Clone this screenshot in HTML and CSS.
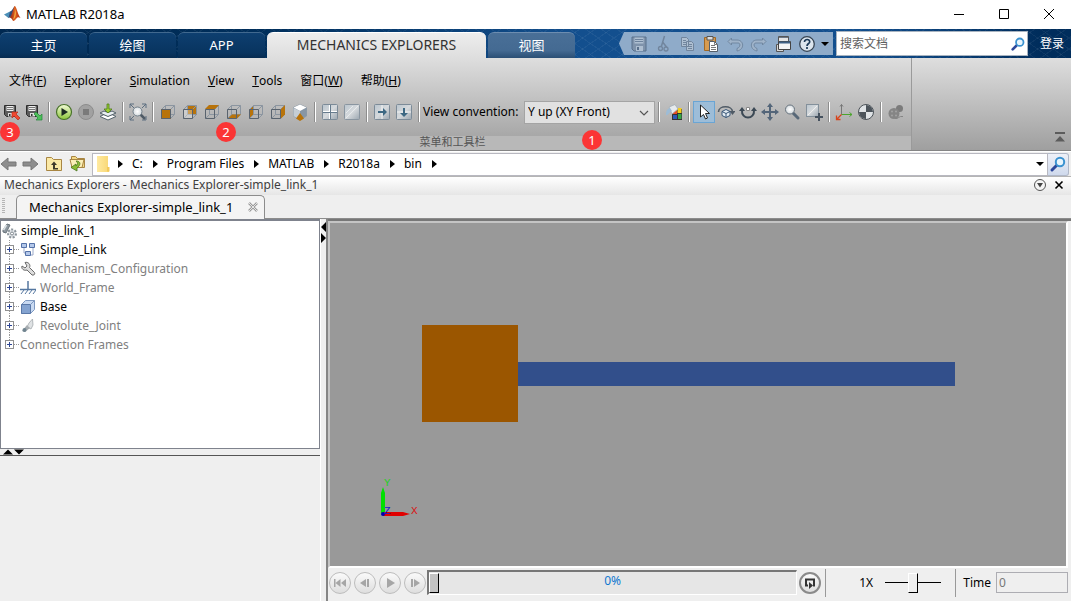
FILE: index.html
```html
<!DOCTYPE html>
<html lang="zh-CN">
<head>
    <meta charset="UTF-8">
    <meta name="viewport" content="width=device-width, initial-scale=1.0">
    <title>MATLAB R2018a</title>
    <link rel="stylesheet" href="styles.css">
</head>
<body>
    <!-- Shared shapes and gradients -->
    <svg class="defs" aria-hidden="true">
        <defs>
            <linearGradient id="green" x1="0" y1="0" x2="0" y2="1">
                <stop offset="0" stop-color="#f4fcd8"/><stop offset="1" stop-color="#8cc63a"/>
            </linearGradient>
            <linearGradient id="glass" x1="0" y1="0" x2="1" y2="1">
                <stop offset="0" stop-color="#b9c4cd"/><stop offset=".5" stop-color="#d6dadd"/><stop offset="1" stop-color="#9ba6b0"/>
            </linearGradient>
            <linearGradient id="folder" x1="0" y1="0" x2="1" y2="0">
                <stop offset="0" stop-color="#ffeaa0"/><stop offset="1" stop-color="#f8d775"/>
            </linearGradient>
            <linearGradient id="flame" x1="0" y1="0" x2="1" y2="0">
                <stop offset="0" stop-color="#8c1f16"/><stop offset=".5" stop-color="#e0601e"/><stop offset="1" stop-color="#b02a18"/>
            </linearGradient>
            <radialGradient id="ball">
                <stop offset="0" stop-color="#fff"/><stop offset="1" stop-color="#d4dade"/>
            </radialGradient>
            <symbol id="disk" viewBox="0 0 18 18">
                <path d="M1.5 2.5h11v11h-9l-2-2z" fill="#5c5c5c" stroke="#2e2e2e"/>
                <path d="M3.5 3h7v5h-7z" fill="#eee"/>
                <path d="M4 4.5h6M4 6.500h6" stroke="#777"/>
                <path d="M5 10h5v3.500H5z" fill="#ddd"/><path d="M6 11h1.500v2H6z" fill="#333"/>
            </symbol>
            <symbol id="cube-back" viewBox="0 0 18 18">
                <path d="M6.5 2.5h9v9h-9zM2.5 15.5l4-4M11.5 15.5l4-4M2.5 6.5l4-4M11.5 6.5l4-4" fill="none" stroke="#8b95a0"/>
            </symbol>
            <symbol id="cube-front" viewBox="0 0 18 18">
                <path d="M2.5 6.5h9v9h-9z" fill="none" stroke="#59636e"/>
            </symbol>
            <symbol id="magnifier" viewBox="0 0 18 18">
                <path d="M8 10L3 15" stroke="#2c479b" stroke-width="3" stroke-linecap="round"/>
                <circle cx="11" cy="7" r="4.2" fill="#e8f5fd" stroke="#3a92d0" stroke-width="2"/>
            </symbol>
        </defs>
    </svg>

    <header class="titlebar">
        <svg class="logo" viewBox="0 0 18 18">
            <path d="M0 9.5l6-3 2.5 3.5-4 3z" fill="#4b8fb8"/>
            <path d="M6 6.5c2 0 3-4 5-5.5L8 11l-3.5 2z" fill="#324a78"/>
            <path d="M10.5 1c2 0 3 8 6 12-2-1-3-1-4.5 1s-3 2-3 2-1-3-3.500-3.500C8 11 9 4 10.5 1z" fill="url(#flame)"/>
            <path d="M10.5 1.5c.7 3 .8 8-1.500 13 2-1 3-4 2.800-7z" fill="#f5b342"/>
        </svg>
        <h1>MATLAB R2018a</h1>
        <div class="window-buttons">
            <button aria-label="Minimize"><svg viewBox="0 0 12 12"><path d="M1 6.5h10"/></svg></button>
            <button aria-label="Maximize"><svg viewBox="0 0 12 12"><path d="M1.5 1.5h9v9h-9z"/></svg></button>
            <button aria-label="Close"><svg viewBox="0 0 12 12"><path d="M1 1l10 10M11 1L1 11"/></svg></button>
        </div>
    </header>

    <nav class="tabbar">
        <div class="tabs">
            <button class="tab">主页</button>
            <button class="tab">绘图</button>
            <button class="tab">APP</button>
            <button class="tab active">MECHANICS EXPLORERS</button>
            <button class="tab context">视图</button>
        </div>
        <div class="quick-access">
            <button aria-label="Save"><svg viewBox="0 0 18 18"><path d="M2 2h14v14H4l-2-2z" fill="#7f93ab" stroke="#59708c"/><path d="M4.5 2.5h9v6h-9z" fill="#aebfd1"/><path d="M5 4.5h8M5 6.5h8" stroke="#6d839d"/><path d="M6 11h7v5H6z" fill="#aebfd1"/><path d="M7 12h2v3H7z" fill="#59708c"/></svg></button>
            <button aria-label="Cut"><svg viewBox="0 0 18 18"><path d="M10.5 1L7.5 11M9 7.5l3.5 4.5" fill="none" stroke="#71859d" stroke-width="1.5"/><circle cx="6.5" cy="13.5" r="2" fill="none" stroke="#71859d" stroke-width="1.3"/><circle cx="12" cy="14" r="2" fill="none" stroke="#71859d" stroke-width="1.3"/></svg></button>
            <button aria-label="Copy"><svg viewBox="0 0 18 18"><path d="M3.5 2.5h5l2 2v7h-7zM8.5 6.5h5l2 2v7h-7z" fill="#aebfd1" stroke="#71859d"/><path d="M5 5.5h3M5 7.5h3M5 9.5h3M10 9.5h4M10 11.5h4M10 13.5h4" stroke="#71859d"/></svg></button>
            <button aria-label="Paste"><svg viewBox="0 0 18 18"><path d="M2.5 2.5h11v13h-11z" fill="#d79b50" stroke="#a06825"/><path d="M5 1.5h6V5H5z" fill="#ddd" stroke="#555"/><path d="M7.5 6.5h5l3 3v7h-8z" fill="#fff" stroke="#555f69"/><path d="M12.5 6.5v3h3M9 10.5h4M9 12.5h5M9 14.5h5" fill="none" stroke="#777"/></svg></button>
            <button aria-label="Undo"><svg viewBox="0 0 18 18"><path d="M5.5 3L2 6.5 5.5 10V8H12c3 0 2.5 4.5-1 5.5V16c8-1.500 7-11 0-11H5.5z" fill="#9fb3c9" stroke="#7087a1"/></svg></button>
            <button aria-label="Redo"><svg viewBox="0 0 18 18"><path d="M12.5 3L16 6.5 12.5 10V8H6c-3 0-2.5 4.5 1 5.5V16C-1 14.5 0 5 7 5h5.5z" fill="#9fb3c9" stroke="#7087a1"/></svg></button>
            <button aria-label="Switch windows"><svg viewBox="0 0 18 18"><path d="M4.5 1.5h10v6h-10z" fill="#e4e4e4" stroke="#555"/><path d="M5 2.5h9" stroke="#6b7787"/><path d="M2.500 9.5h7v7h-7z" fill="#d8d8d8" stroke="#555"/><path d="M4.5 6.5h12v8h-12z" fill="#f4f4f4" stroke="#444"/><path d="M5 7.500h11" stroke="#3f6084" stroke-width="2"/></svg></button>
            <button aria-label="Help"><svg viewBox="0 0 18 18"><circle cx="9" cy="9" r="7.3" fill="#dbe5ee" stroke="#374553" stroke-width="1.3"/><path d="M6.5 7c0-3.500 5.500-3.200 5.200 0-.2 1.500-2.700 1.700-2.700 4M9 12v2" fill="none" stroke="#1c3a58" stroke-width="1.700"/></svg></button>
            <button aria-label="More" class="more"><svg viewBox="0 0 8 6"><path d="M0 1h8L4 5z"/></svg></button>
        </div>
        <div class="doc-search">
            <input type="search" placeholder="搜索文档" aria-label="搜索文档">
            <svg viewBox="0 0 18 18"><use href="#magnifier"/></svg>
        </div>
        <a href="#" class="login">登录</a>
    </nav>

    <section class="ribbon">
        <div class="ribbon-section">
            <div class="menubar">
                <button>文件(<u>F</u>)</button>
                <button><u>E</u>xplorer</button>
                <button><u>S</u>imulation</button>
                <button><u>V</u>iew</button>
                <button><u>T</u>ools</button>
                <button>窗口(<u>W</u>)</button>
                <button>帮助(<u>H</u>)</button>
            </div>
            <div class="toolbar">
                <div class="tool-group marked mark-save">
                    <button aria-label="Save explorer configuration"><svg viewBox="0 0 18 18"><use href="#disk" width="18" height="18"/><path d="M9 9h6l-2 2 4 4-2 2-4-4-2 2z" fill="#f04a32" stroke="#b52b1b" stroke-width=".7"/></svg></button>
                    <button aria-label="Load explorer configuration"><svg viewBox="0 0 18 18"><use href="#disk" width="18" height="18"/><path d="M17 17h-6l2-2-4-4 2-2 4 4 2-2z" fill="#4fbf5b" stroke="#218737" stroke-width=".7"/></svg></button>
                    <span class="badge">3</span>
                </div>
                <span class="sep"></span>
                <button aria-label="Start"><svg viewBox="0 0 18 18"><circle cx="9" cy="9" r="7.5" fill="url(#green)" stroke="#48722a" stroke-width="1.2"/><path d="M6.5 5l6.5 4-6.500 4z" fill="#1d2b22"/></svg></button>
                <button aria-label="Stop"><svg viewBox="0 0 18 18"><circle cx="9" cy="9" r="7.5" fill="#a1a1a1" stroke="#8c8c8c"/><path d="M6 6h6v6H6z" fill="#7a7a7a"/></svg></button>
                <button aria-label="Update diagram"><svg viewBox="0 0 18 18"><path d="M1 13.5l4-2 4 1.500 4-1.500 4 2-8 3.500z" fill="#fff" stroke="#55636b"/><path d="M1 10l4-2 4 1.500L13 8l4 2-8 3.500z" fill="#e8eef0" stroke="#55636b"/><path d="M8 1h2v5h3l-4 4-4-4h3z" fill="#9acb34" stroke="#4f7d18" stroke-width=".8"/></svg></button>
                <span class="sep"></span>
                <button aria-label="Fit to view"><svg viewBox="0 0 18 18"><path d="M5 5L1 1M1 5V1h4M13 5l4-4M13 1h4v4M5 13l-4 4M1 13v4h4M17 13v4h-4" fill="none" stroke="#5d6f80"/><path d="M11 11l5 5" stroke="#4f5b66" stroke-width="2.5"/><circle cx="8.5" cy="8.5" r="4.5" fill="url(#ball)" stroke="#73808a"/></svg></button>
                <span class="sep"></span>
                <div class="tool-group marked mark-views">
                    <button aria-label="Front view"><svg viewBox="0 0 18 18"><use href="#cube-back"/><path d="M2 6h10v10H2z" fill="#b8730a"/><use href="#cube-front"/></svg></button>
                    <button aria-label="Back view"><svg viewBox="0 0 18 18"><path d="M7 3h9v9H7z" fill="#b8730a"/><use href="#cube-back"/><path d="M3 7h8v8H3z" fill="#fff" opacity=".3"/><use href="#cube-front"/></svg></button>
                    <button aria-label="Top view"><svg viewBox="0 0 18 18"><use href="#cube-back"/><path d="M2 6l4-4h10l-4 4z" fill="#b8730a"/><use href="#cube-front"/></svg></button>
                    <button aria-label="Bottom view"><svg viewBox="0 0 18 18"><use href="#cube-back"/><path d="M3 15.5l4-4h9l-4 4z" fill="#b8730a"/><use href="#cube-front"/></svg></button>
                    <button aria-label="Left view"><svg viewBox="0 0 18 18"><path d="M2.5 6.5l4-4v9l-4 4z" fill="#b8730a"/><use href="#cube-back"/><use href="#cube-front"/></svg></button>
                    <button aria-label="Right view"><svg viewBox="0 0 18 18"><use href="#cube-back"/><path d="M12 6l4-4v9.500l-4 4z" fill="#b8730a"/><use href="#cube-front"/></svg></button>
                    <button aria-label="Isometric view"><svg viewBox="0 0 18 18"><path d="M2.5 4.5L9 1.5l6.5 3V13L9 17l-6.500-4z" fill="#8796a5" stroke="#8b98a5"/><path d="M2.5 4.5L9 1.5l6.5 3L9 8z" fill="#fff"/><path d="M2.5 5L9 8v9l-6.500-4z" fill="#c5cdd4"/><path d="M5 15.5L9 10l4 5.5L9 18z" fill="#b8730a"/></svg></button>
                    <span class="badge">2</span>
                </div>
                <span class="sep"></span>
                <button aria-label="Split into four"><svg viewBox="0 0 18 18"><rect x="1.5" y="1.5" width="15" height="15" rx="1" fill="url(#glass)" stroke="#7c8b98"/><path d="M9 2v14M2 9h14" stroke="#fff" stroke-width="2"/><path d="M9.5 2v14M2 9.5h14" stroke="#667b8d"/></svg></button>
                <button aria-label="Single view"><svg viewBox="0 0 18 18"><rect x="1.5" y="1.5" width="15" height="15" rx="1" fill="url(#glass)" stroke="#8995a0"/><path d="M3 15L15 3M3 10l7-7" stroke="#e6eaec"/></svg></button>
                <span class="sep"></span>
                <button aria-label="Split vertically"><svg viewBox="0 0 18 18"><rect x="1.5" y="1.5" width="15" height="15" rx="1" fill="url(#glass)" stroke="#7c8b98"/><path d="M9 2v14" stroke="#f5f5f5"/><path d="M5 8h5V5l4 4-4 4v-3H5z" fill="#3d6883"/></svg></button>
                <button aria-label="Split horizontally"><svg viewBox="0 0 18 18"><rect x="1.5" y="1.5" width="15" height="15" rx="1" fill="url(#glass)" stroke="#7c8b98"/><path d="M2 9h14" stroke="#f5f5f5"/><path d="M8 5v5H5l4 4 4-4h-3V5z" fill="#3d6883"/></svg></button>
                <span class="sep"></span>
                <label for="convention">View convention:</label>
                <div class="marked mark-select">
                    <select id="convention">
                        <option>Y up (XY Front)</option>
                        <option>Z up (XY Top)</option>
                    </select>
                    <svg class="chevron" viewBox="0 0 10 6"><path d="M1 1l4 4 4-4" fill="none" stroke="#555" stroke-width="1.2"/></svg>
                    <span class="badge">1</span>
                </div>
                <span class="sep"></span>
                <button aria-label="Background color"><svg viewBox="0 0 18 18"><path d="M7 6h10v11H7z" fill="#333"/><path d="M8 7h4v4H8z" fill="#e84a23"/><path d="M12.500 5h4v5h-4z" fill="#f5cf1d"/><path d="M8 12h4v4H8z" fill="#2b59b7"/><path d="M13 11h3.500v5H13z" fill="#36a547"/><path d="M4 4l6-2.500L13 6l-6 5z" fill="#e6eaed" stroke="#a2acb4" stroke-width=".8"/><path d="M5 5c-4 1-4 5-4 7 2 1 3-3 6-4z" fill="#9dbcd6"/></svg></button>
                <span class="sep"></span>
                <button aria-label="Select" class="pressed"><svg viewBox="0 0 18 18"><path d="M5.5 2v12l3-2.500 2 4.500 2-1-2-4.500h4z" fill="#fff" stroke="#222"/></svg></button>
                <button aria-label="Rotate"><svg viewBox="0 0 18 18"><path d="M1.500 9c0-7 14-7 14 0" fill="none" stroke="#505b66" stroke-width="1.6"/><path d="M12.5 8h6l-3 4z" fill="#505b66"/><path d="M5 8.500l4-2 4 2v4l-4 2-4-2z" fill="#e5edf3" stroke="#375577"/><path d="M5 8.500l4 2 4-2M9 10.500v4" fill="none" stroke="#375577"/></svg></button>
                <button aria-label="Roll"><svg viewBox="0 0 18 18"><path d="M3 7c-1 10 13 10 12 0" fill="none" stroke="#3c4955" stroke-width="2"/><path d="M0 8l3-4 3 4zM12 8l3-4 3 4z" fill="#3c4955"/><path d="M7.5 4.5h3v3h-3z" fill="#fff" stroke="#888"/></svg></button>
                <button aria-label="Pan"><svg viewBox="0 0 18 18"><path d="M9 2v14M2 9h14" stroke="#536579" stroke-width="2"/><path d="M9 0l3 4H6zM9 18l3-4H6zM0 9l4-3v6zM18 9l-4-3v6z" fill="#536579"/></svg></button>
                <button aria-label="Zoom"><svg viewBox="0 0 18 18"><path d="M10 10l5 5" stroke="#586878" stroke-width="3" stroke-linecap="round"/><circle cx="7" cy="6.5" r="4.5" fill="url(#ball)" stroke="#66727d"/></svg></button>
                <button aria-label="Zoom region"><svg viewBox="0 0 18 18"><rect x="1.5" y="1.5" width="12" height="12" fill="url(#glass)" stroke="#83909b"/><path d="M3 12l9-9" stroke="#eee"/><path d="M14 10v8M10 14h8" stroke="#46525f" stroke-width="2"/></svg></button>
                <span class="sep"></span>
                <button aria-label="Show frames"><svg viewBox="0 0 18 18"><path d="M6.5 11.5v-10M5 3.5l1.500-2L8 3.5" fill="none" stroke="#777"/><path d="M6.5 11.5H17M14.5 9.5l2.500 2-2.500 2" fill="none" stroke="#4ba52d"/><path d="M6.5 11.5L2 16M1.500 12.5v4h4" fill="none" stroke="#d8441b" stroke-width="1.3"/></svg></button>
                <button aria-label="Show centers of mass"><svg viewBox="0 0 18 18"><circle cx="9" cy="9" r="7.5" fill="#dfe3e6" stroke="#4b5258"/><path d="M9 9V2a7 7 0 0 1 7 7zM9 9v7a7 7 0 0 1-7-7z" fill="#4c545b"/></svg></button>
                <span class="sep"></span>
                <button aria-label="Record video"><svg viewBox="0 0 18 18"><circle cx="12.5" cy="5.5" r="3.5" fill="#7b7b7b"/><circle cx="7" cy="10.5" r="5.5" fill="#858585"/><g fill="#a3a3a3"><circle cx="5" cy="8.5" r="1"/><circle cx="9" cy="8.5" r="1"/><circle cx="5" cy="12.5" r="1"/><circle cx="9" cy="12.5" r="1"/></g><path d="M8 15.5c3 1 4-3 8-2" stroke="#858585" fill="none"/></svg></button>
            </div>
            <div class="section-title">菜单和工具栏</div>
        </div>
        <button class="collapse" aria-label="Collapse ribbon"><svg viewBox="0 0 10 10"><path d="M0 0h10v2H0zM5 4l5 5.5H0z"/></svg></button>
    </section>

    <div class="address-bar">
        <div class="nav-buttons">
            <button aria-label="Back"><svg viewBox="0 0 18 18"><path d="M1 9l7-6v4h8v4H8v4z" fill="#8d8d8d" stroke="#777"/></svg></button>
            <button aria-label="Forward"><svg viewBox="0 0 18 18"><path d="M17 9l-7-6v4H2v4h8v4z" fill="#8d8d8d" stroke="#777"/></svg></button>
            <button aria-label="Up one level"><svg viewBox="0 0 18 18"><path d="M1.5 2.5h5l2 2h8v11h-15z" fill="#fbe9a6" stroke="#a88643"/><path d="M9 6.500l3 3.500h-2v3h3v1.500H8V10H6z" fill="#3f3a2c"/></svg></button>
            <button aria-label="Browse for folder"><svg viewBox="0 0 18 18"><path d="M3.5 1.5h4l2 2h7v9h-13z" fill="#f3d988" stroke="#a88643"/><path d="M2 4.500h14l-2 8H4z" fill="#fbeeb8" stroke="#a88643"/><path d="M8 6c5 0 5 4 1 7v3L3 12.5 8 9v2c2-2 2-3 0-5z" fill="#8bbd35" stroke="#4a7520" stroke-width=".8"/></svg></button>
        </div>
        <div class="path">
            <svg class="path-folder" viewBox="0 0 14 16"><path d="M1 0h11v13h1v3H1z" fill="url(#folder)"/><path d="M11 11h2.500v4.500H11z" fill="#f3c95a"/></svg>
            <ol>
                <li><a href="#">C:</a></li>
                <li><a href="#">Program Files</a></li>
                <li><a href="#">MATLAB</a></li>
                <li><a href="#">R2018a</a></li>
                <li><a href="#">bin</a></li>
                <li></li>
            </ol>
            <button class="path-drop" aria-label="Recent folders"><svg viewBox="0 0 8 6"><path d="M0 1h8L4 5z"/></svg></button>
        </div>
        <button class="path-search" aria-label="Search"><svg viewBox="0 0 18 18"><use href="#magnifier"/></svg></button>
    </div>

    <div class="panel-title">
        <h2>Mechanics Explorers - Mechanics Explorer-simple_link_1</h2>
        <button aria-label="Panel actions"><svg viewBox="0 0 14 14"><circle cx="7" cy="7" r="5.5" fill="#f5f5f5" stroke="#555"/><path d="M4 5h6L7 9.5z" fill="#444"/></svg></button>
        <button aria-label="Close panel"><svg viewBox="0 0 14 14"><path d="M3.5 3.5l7 7M10.5 3.5l-7 7" stroke="#000" stroke-width="1.600"/></svg></button>
    </div>

    <div class="doc-tabs">
        <span class="grip"></span>
        <div class="doc-tab">
            <span>Mechanics Explorer-simple_link_1</span>
            <button aria-label="Close tab"><svg viewBox="0 0 10 10"><path d="M1 1l8 8M9 1L1 9" stroke="#9a9a9a" stroke-width="2.500"/><path d="M1 1l8 8M9 1L1 9" stroke="#e4e4e4"/></svg></button>
        </div>
    </div>

    <main class="workspace">
        <aside class="sidebar">
            <div class="tree">
                <div class="tree-root">
                    <svg viewBox="0 0 18 18"><path d="M2 8l4-6 3 1-4 8-3-1z" fill="#8d979f" stroke="#6b757d"/><path d="M2.5 8l3-5" stroke="#dde3e7" stroke-width="1.5"/><circle cx="11" cy="11.500" r="4" fill="#e4e7ea" stroke="#8b949b" stroke-width="2" stroke-dasharray="2 1.5"/><circle cx="11" cy="11.500" r="1.5" fill="#fff" stroke="#7d868d"/></svg>
                    <span>simple_link_1</span>
                </div>
                <ul>
                    <li><button class="expander" aria-label="Expand"></button>
                        <svg viewBox="0 0 16 16"><path d="M4 6v5h4M13 6v7h-3" fill="none" stroke="#9aa9c9"/><path d="M1.5 1.5h5v4h-5zM9.5 1.5h5v4h-5zM5.5 9.5h5v4h-5z" fill="#b4c8ea" stroke="#5572a8"/></svg>
                        <span>Simple_Link</span></li>
                    <li class="muted"><button class="expander" aria-label="Expand"></button>
                        <svg viewBox="0 0 16 16"><path d="M2 5l3 2 2-2-2-3.500c3-1 6 2 4.500 5l5 5c1 2-1 3-2.500 2.500l-5-5C4 10 1 8 2 5z" fill="#ddd" stroke="#6a6a6a"/></svg>
                        <span>Mechanism_Configuration</span></li>
                    <li class="muted"><button class="expander" aria-label="Expand"></button>
                        <svg viewBox="0 0 16 16"><path d="M8 1v8M0 9.5h16" stroke="#5577a0" stroke-width="1.5"/><path d="M4 10l-3 4M8 10l-3 4M12 10l-3 4M16 10l-3 4" stroke="#5577a0"/></svg>
                        <span>World_Frame</span></li>
                    <li><button class="expander" aria-label="Expand"></button>
                        <svg viewBox="0 0 16 16"><path d="M1.5 5.5l4-4h9v9l-4 4h-9z" fill="#c9daf2" stroke="#7d98c0"/><path d="M1.5 5.5h9v9h-9z" fill="#84a3d0" stroke="#5b79a8"/><path d="M10.5 5.5l4-4" stroke="#7d98c0"/></svg>
                        <span>Base</span></li>
                    <li class="muted"><button class="expander" aria-label="Expand"></button>
                        <svg viewBox="0 0 16 16"><path d="M12.500 1L9 5 7 9l4 2 2-4z" fill="#dfe2e4" stroke="#a3a9ad" stroke-width=".8"/><path d="M7 7l3 3-5 4-3-1z" fill="#a7adb1"/><circle cx="4.500" cy="12" r="2" fill="#708490"/></svg>
                        <span>Revolute_Joint</span></li>
                    <li class="muted plain"><button class="expander" aria-label="Expand"></button>
                        <span>Connection Frames</span></li>
                </ul>
            </div>
            <div class="split-handle"><svg viewBox="0 0 24 6"><path d="M3 5.5l5-5 5 5zM14 .5h10l-5 5z"/></svg></div>
            <div class="properties"></div>
        </aside>
        <div class="divider"><svg viewBox="0 0 6 24"><path d="M5 1v10L0 6zM0 12l5 5-5 5z"/></svg></div>
        <section class="viewer">
            <div class="canvas">
                <svg viewBox="0 0 736 343" preserveAspectRatio="xMidYMid meet">
                    <rect x="188" y="139" width="437" height="24" fill="#324f8b"/>
                    <rect x="92" y="102" width="96" height="97" fill="#9b5600"/>
                    <path d="M51 290v-20l2-6 2 6v20z" fill="#00e000"/>
                    <path d="M53 289h20l7 2-7 2H53z" fill="#e00000"/>
                    <circle cx="53" cy="291" r="2" fill="#0000b0"/>
                    <g class="axes">
                        <text x="54" y="263" fill="#1fd01f">Y</text>
                        <text x="54" y="291" fill="#1a1ac8">Z</text>
                        <text x="81" y="291" fill="#d81414">X</text>
                    </g>
                </svg>
            </div>
            <div class="player">
                <div class="play-buttons">
                    <button aria-label="Go to start"><svg viewBox="0 0 12 12"><path d="M0 2h1.500v8H0zM6.500 2v8l-5-4zM12 2v8L7 6z"/></svg></button>
                    <button aria-label="Step back"><svg viewBox="0 0 12 12"><path d="M7 2v8L1 6zM8 2h2v8H8z"/></svg></button>
                    <button aria-label="Play"><svg viewBox="0 0 12 12"><path d="M3 1l8 5-8 5z"/></svg></button>
                    <button aria-label="Step forward"><svg viewBox="0 0 12 12"><path d="M2 2h2v8H2zM5 2l6 4-6 4z"/></svg></button>
                </div>
                <div class="progress">
                    <input type="range" min="0" max="100" value="0" id="progress" aria-label="Progress">
                    <output for="progress">0%</output>
                </div>
                <button class="loop" aria-label="Loop"><svg viewBox="0 0 12 12"><path d="M4 8.5H2v-6h8v6H9" fill="none" stroke="#333" stroke-width="2"/><path d="M5 5l4 3.500L5 12z" fill="#333"/></svg></button>
                <div class="speed">
                    <label for="speed">1X</label>
                    <input type="range" id="speed" min="0" max="10" value="5">
                </div>
                <div class="time">
                    <label for="time">Time</label>
                    <input type="text" id="time" value="0" disabled>
                </div>
            </div>
        </section>
    </main>
</body>
</html>
```
FILE: styles.css
```css
* {
    margin: 0;
    padding: 0;
    box-sizing: border-box;
}

body {
    font-family: "Noto Sans", "Noto Sans CJK SC", sans-serif;
    font-size: 12px;
    line-height: 16px;
    color: #000;
    background: #efefef;
    height: 100vh;
    display: flex;
    flex-direction: column;
    overflow: hidden;
}

button,
input,
select {
    font: inherit;
    color: inherit;
    border: none;
    background: none;
    outline: none;
}

button {
    display: flex;
    align-items: center;
    justify-content: center;
    flex-shrink: 0;
}

svg {
    display: block;
    flex-shrink: 0;
}

a {
    color: inherit;
    text-decoration: none;
}

.defs {
    position: absolute;
    width: 0;
    height: 0;
}

/* Title bar */
.titlebar {
    height: 29px;
    flex-shrink: 0;
    display: flex;
    align-items: center;
    background: #fff;
    padding-left: 4px;
    padding-bottom: 2px;
}

.logo {
    width: 18px;
    height: 18px;
    margin-right: 4px;
}

.titlebar h1 {
    font-size: 13px;
    font-weight: normal;
    flex-grow: 1;
}

.window-buttons {
    display: flex;
}

.window-buttons button {
    width: 45px;
    height: 27px;
}

.window-buttons svg {
    width: 12px;
    height: 12px;
    fill: none;
    stroke: #000;
}

/* Main tabs */
.tabbar {
    height: 29px;
    flex-shrink: 0;
    display: flex;
    align-items: center;
    background:
        repeating-linear-gradient(35deg, transparent 0 8px, rgba(255,255,255,0.05) 8px 9px),
        repeating-linear-gradient(-35deg, transparent 0 8px, rgba(255,255,255,0.05) 8px 9px),
        linear-gradient(90deg, #002850 0, #002f5c 25%, #134f8e 54%, #134f8e 80%, #002d5c 97%);
}

.tabs {
    display: flex;
    align-self: flex-end;
    gap: 2px;
    flex-grow: 1;
}

.tab {
    width: 87px;
    height: 26px;
    padding-bottom: 2px;
    background: linear-gradient(#0e3f70, #08345f 80%, #062b50);
    border-top: 1px solid #41698f;
    border-radius: 6px 6px 0 0;
    color: #fff;
    font-size: 13px;
}

.tab.active {
    width: 219px;
    background: linear-gradient(#ededed, #dedede);
    border-top-color: #fff;
    color: #333;
    font-size: 14px;
}

.tab.context {
    background: linear-gradient(#496f97, #446a92 70%, #2b4f75);
    border-top-color: #6d8db0;
}

.quick-access {
    display: flex;
    align-items: center;
    height: 23px;
    padding-left: 8px;
    padding-right: 2px;
    background: #8fabc9;
    clip-path: polygon(5px 0, 100% 0, 100% 100%, 5px 100%, 0 50%);
}

.quick-access button {
    width: 24px;
    height: 22px;
}

.quick-access svg {
    width: 18px;
    height: 18px;
}

.quick-access .more {
    width: 12px;
}

.quick-access .more svg {
    width: 8px;
    height: 6px;
}

.doc-search {
    width: 192px;
    height: 25px;
    margin-left: 3px;
    padding: 0 1px 0 3px;
    display: flex;
    align-items: center;
    background: #fff;
    border: 1px solid #a9b4c0;
}

.doc-search input {
    flex-grow: 1;
    min-width: 0;
}

.doc-search input::placeholder {
    color: #5f5f5f;
}

.doc-search svg {
    width: 16px;
    height: 16px;
}

.login {
    color: #fff;
    margin: 0 7px 0 12px;
}

/* Ribbon */
.ribbon {
    height: 93px;
    flex-shrink: 0;
    display: flex;
    justify-content: space-between;
    align-items: flex-end;
    background: linear-gradient(#dedede, #9f9f9f);
    border-bottom: 1px solid #858585;
}

.ribbon-section {
    align-self: stretch;
    display: flex;
    flex-direction: column;
    background: linear-gradient(#dedede, #a8a8a8 84%);
    border-right: 1px solid #9a9a9a;
}

.menubar {
    display: flex;
    gap: 18px;
    padding: 15px 9px 11px;
}

.toolbar {
    height: 24px;
    display: flex;
    align-items: center;
    padding: 0 4px 0 1px;
}

.toolbar button {
    width: 22px;
    height: 22px;
}

.toolbar button svg {
    width: 18px;
    height: 18px;
}

.toolbar .pressed {
    background: #9dbdd8;
    border: 1px solid #6aa5d4;
}

.toolbar label {
    width: 101px;
    white-space: nowrap;
}

.tool-group {
    display: flex;
}

.sep {
    width: 8px;
    height: 20px;
    flex-shrink: 0;
    background: linear-gradient(90deg, transparent 3px, #8d8d8d 3px 4px, #fff 4px 5px, transparent 5px);
}

.toolbar select {
    display: block;
    width: 131px;
    height: 23px;
    padding-left: 3px;
    border: 1px solid #a4a4a4;
    border-radius: 0;
    appearance: none;
    background: #e1e1e1;
}

.chevron {
    position: absolute;
    right: 6px;
    top: 9px;
    width: 10px;
    height: 6px;
    pointer-events: none;
}

.marked {
    position: relative;
}

.badge {
    position: absolute;
    width: 20px;
    height: 20px;
    line-height: 20px;
    border-radius: 50%;
    background: #fb3535;
    color: #fff;
    font-size: 13px;
    text-align: center;
}

.mark-save .badge {
    left: -1px;
    top: 21px;
}

.mark-views .badge {
    left: 59px;
    top: 21px;
}

.mark-select .badge {
    left: 58px;
    top: 29px;
}

.section-title {
    margin-top: auto;
    padding-right: 6px;
    height: 14px;
    line-height: 12px;
    font-size: 11px;
    text-align: center;
    color: #555;
    background: #b8b8b8;
}

.collapse {
    padding: 0 6px 8px;
}

.collapse svg {
    width: 10px;
    height: 10px;
    fill: #5c5c5c;
}

/* Address bar */
.address-bar {
    height: 25px;
    flex-shrink: 0;
    display: flex;
    align-items: center;
    padding-right: 2px;
    border-top: 1px solid #fff;
}

.nav-buttons {
    display: flex;
    width: 92px;
}

.nav-buttons button {
    width: 23px;
}

.nav-buttons button:first-child {
    width: 18px;
}

.nav-buttons button:nth-child(2) {
    width: 24px;
}

.nav-buttons svg,
.path-search svg {
    width: 18px;
    height: 18px;
}

.path {
    flex-grow: 1;
    height: 23px;
    display: flex;
    align-items: center;
    background: #fff;
    border: 1px solid #b8b8c0;
    padding: 0 3px;
}

.path-folder {
    width: 14px;
    height: 16px;
}

.path ol {
    display: flex;
    list-style: none;
    flex-grow: 1;
    margin-left: 8px;
}

.path li {
    display: flex;
    align-items: center;
    margin-right: 10px;
}

.path li::before {
    content: "";
    border: 4px solid transparent;
    border-left: 5px solid #000;
    border-right: none;
    margin-right: 9px;
}

.path-drop svg {
    width: 8px;
    height: 6px;
}

.path-search {
    width: 21px;
    height: 23px;
    background: linear-gradient(#eef1f8, #cfd9ec);
    border: 1px solid #b0b8c8;
    border-left: none;
    border-radius: 0 3px 3px 0;
}

/* Panel title and document tabs */
.panel-title {
    height: 19px;
    flex-shrink: 0;
    display: flex;
    align-items: center;
    gap: 5px;
    padding: 0 5px 2px 4px;
    background: linear-gradient(#fff, #e6e6e6);
    border-top: 1px solid #b5b5b5;
}

.panel-title h2 {
    font-size: 12px;
    font-weight: normal;
    color: #404040;
    flex-grow: 1;
}

.panel-title svg {
    width: 14px;
    height: 14px;
}

.doc-tabs {
    height: 24px;
    flex-shrink: 0;
    display: flex;
    align-items: flex-end;
    border-bottom: 1px solid #8c8c8c;
}

.grip {
    width: 3px;
    height: 16px;
    margin: 0 11px 4px 2px;
    background: repeating-linear-gradient(#b5b5b5 0 1px, transparent 1px 2px);
}

.doc-tab {
    height: 24px;
    display: flex;
    align-items: center;
    gap: 15px;
    margin-bottom: -1px;
    padding: 0 6px 1px 12px;
    background: #f4f4f4;
    border: 1px solid #8c8c8c;
    border-bottom: none;
    border-radius: 5px 5px 0 0;
    font-size: 13px;
}

.doc-tab svg {
    width: 10px;
    height: 10px;
}

/* Workspace */
.workspace {
    flex-grow: 1;
    min-height: 0;
    display: flex;
}

.sidebar {
    width: 30%;
    max-width: 320px;
    display: flex;
    flex-direction: column;
}

.tree {
    flex: 11;
    background: #fff;
    border: 1px solid #7f838d;
    border-top: 2px solid #7f838d;
    overflow: hidden;
}

.tree-root {
    display: flex;
    align-items: center;
    gap: 2px;
    height: 19px;
}

.tree-root svg {
    width: 18px;
    height: 18px;
}

.tree ul {
    list-style: none;
}

.tree li {
    display: flex;
    align-items: center;
    height: 19px;
    padding-left: 4px;
    background:
        repeating-linear-gradient(#999 0 1px, transparent 1px 2px) 8px 0 / 1px 100% no-repeat,
        repeating-linear-gradient(90deg, #999 0 1px, transparent 1px 2px) 13px 9px / 6px 1px no-repeat;
}

.tree li.plain {
    background:
        repeating-linear-gradient(#999 0 1px, transparent 1px 2px) 8px 0 / 1px 9px no-repeat,
        repeating-linear-gradient(90deg, #999 0 1px, transparent 1px 2px) 13px 9px / 6px 1px no-repeat;
}

.tree li svg {
    width: 16px;
    height: 16px;
    margin-right: 4px;
}

.muted {
    color: #808080;
}

.expander {
    width: 9px;
    height: 9px;
    margin-right: 6px;
    border: 1px solid #919191;
    background:
        linear-gradient(#2d4594, #2d4594) center / 5px 1px no-repeat,
        linear-gradient(#2d4594, #2d4594) center / 1px 5px no-repeat,
        #fff;
}

.split-handle {
    height: 7px;
    border-bottom: 1px solid #555;
}

.split-handle svg {
    width: 24px;
    height: 6px;
}

.properties {
    flex: 7;
}

.divider {
    width: 8px;
    border-left: 1px solid #fff;
    border-right: 2px solid #858585;
    padding-top: 2px;
}

.divider svg {
    width: 6px;
    height: 24px;
}

.viewer {
    flex-grow: 1;
    min-width: 0;
    display: flex;
    flex-direction: column;
    border-top: 2px solid #777;
    padding-right: 3px;
}

.canvas {
    flex-grow: 1;
    min-height: 0;
    background: #999;
    border: 2px solid #fff;
    border-top-color: #c4c4c4;
    border-left-color: #c4c4c4;
}

.canvas svg {
    width: 100%;
    height: 100%;
}

.axes {
    font-family: "Liberation Mono", monospace;
    font-size: 11px;
}

/* Playback controls */
.player {
    height: 33px;
    flex-shrink: 0;
    display: flex;
    align-items: center;
    padding-bottom: 4px;
}

.play-buttons {
    display: flex;
    gap: 3px;
    margin: 0 1px;
}

.play-buttons button,
.loop {
    width: 22px;
    height: 22px;
    border: 1px solid #bdbdbd;
    border-radius: 50%;
    background: linear-gradient(#fafafa, #dedede);
}

.play-buttons svg,
.loop svg {
    width: 12px;
    height: 12px;
    fill: #a6a6a6;
}

.loop {
    margin: 0 4px 0 2px;
    border: 2px solid #8a8a8a;
}

.progress {
    position: relative;
    flex-grow: 1;
    height: 25px;
    background: #e6e6e6;
    border: 2px solid #777;
    border-right: 1px solid #fff;
    border-bottom: 1px solid #fff;
}

.progress input {
    display: block;
    width: 100%;
    height: 22px;
    appearance: none;
}

.progress input::-webkit-slider-thumb {
    appearance: none;
    width: 10px;
    height: 20px;
    background: #c3c3c3;
    border: 1px solid #000;
    border-top-color: #fff;
    border-left-color: #fff;
}

.progress output {
    position: absolute;
    inset: 0;
    line-height: 18px;
    text-align: center;
    color: #0f78d0;
    pointer-events: none;
}

.speed,
.time {
    height: 28px;
    display: flex;
    align-items: center;
    border-left: 1px solid #999;
}

.speed {
    width: 130px;
    gap: 12px;
    padding-left: 33px;
}

.speed input {
    width: 56px;
    height: 20px;
    appearance: none;
    background: linear-gradient(#000, #000) center / 100% 1px no-repeat;
}

.speed input::-webkit-slider-thumb {
    appearance: none;
    width: 10px;
    height: 20px;
    background: #efefef;
    border: 1px solid #000;
    border-top-color: #fff;
    border-left-color: #fff;
}

.time {
    gap: 5px;
    padding-left: 7px;
}

.time input {
    width: 72px;
    height: 21px;
    padding-left: 2px;
    border: 1px solid #adadb3;
    color: #777;
}
```
